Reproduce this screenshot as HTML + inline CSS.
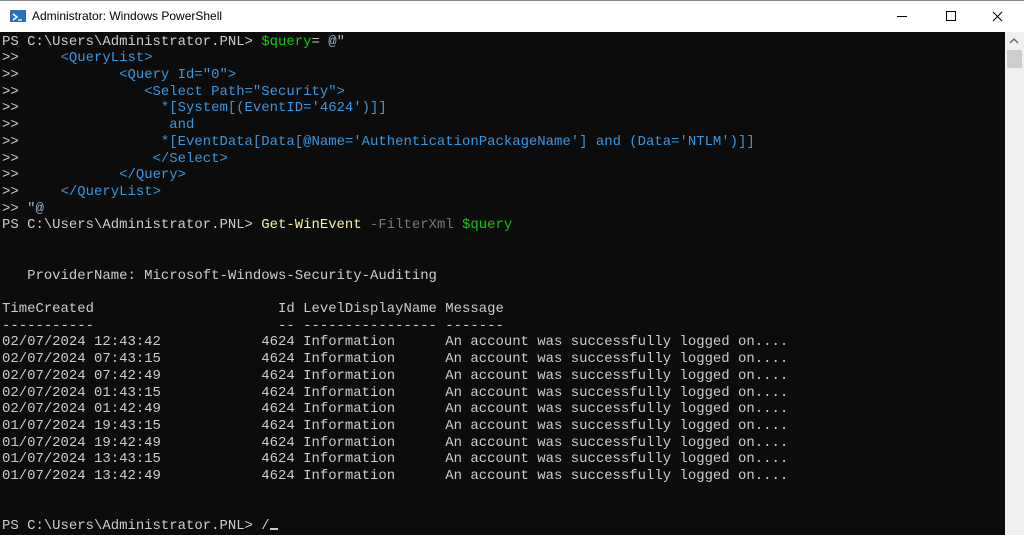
<!DOCTYPE html>
<html><head><style>
body{margin:0;width:1024px;height:535px;overflow:hidden;background:#fff;font-family:"Liberation Sans",sans-serif;}
.title{position:absolute;left:0;top:0;width:1024px;height:32px;background:#fff;border-top:1px solid #888;box-sizing:border-box;}
.title span{position:absolute;left:32px;top:8px;font-size:12px;color:#000;}
.icon{position:absolute;left:10px;top:9px;width:16px;height:12px;background:#2d6fb8;}
.term{position:absolute;left:0;top:32px;width:1005px;height:503px;background:#0c0c0c;}
.sb{position:absolute;left:1005px;top:32px;width:19px;height:503px;background:#f0f0f0;}
.thumb{position:absolute;left:1007px;top:50px;width:15px;height:18px;background:#cdcdcd;}
pre{position:absolute;left:2px;top:33.5px;margin:0;font-family:"Liberation Mono",monospace;font-size:13.95px;line-height:16.72px;color:#cccccc;}
.b{color:#3a96dd}.g{color:#16c60c}.y{color:#f9f1a5}.d{color:#767676}.w{color:#a0b4c8}
.cur{display:inline-block;width:8px;height:2px;background:#ccc;vertical-align:-1px}
</style></head><body>
<div class="title"><div class="icon"><svg width="16" height="12"><path d="M3 3l4 3-4 3" stroke="#fff" stroke-width="1.5" fill="none"/><path d="M8 9h4" stroke="#fff" stroke-width="1.2"/></svg></div><span>Administrator: Windows PowerShell</span>
<svg style="position:absolute;left:880px;top:0" width="144" height="32"><path d="M17 15.5h10" stroke="#000"/><rect x="66.5" y="10.5" width="9" height="9" fill="none" stroke="#000"/><path d="M113 11l9 9M122 11l-9 9" stroke="#000"/></svg></div>
<div class="term"></div>
<div class="sb"><svg width="19" height="20"><path d="M5 11l4-4 4 4" stroke="#606060" fill="none" stroke-width="1.3"/></svg></div>
<div class="thumb"></div>
<pre>PS C:\Users\Administrator.PNL&gt; <span class="g">$query</span>= <span class="w">@"</span>
&gt;&gt;     <span class="b">&lt;QueryList&gt;</span>
&gt;&gt;            <span class="b">&lt;Query Id="0"&gt;</span>
&gt;&gt;               <span class="b">&lt;Select Path="Security"&gt;</span>
&gt;&gt;                 <span class="b">*[System[(EventID='4624')]]</span>
&gt;&gt;                  <span class="b">and</span>
&gt;&gt;                 <span class="b">*[EventData[Data[@Name='AuthenticationPackageName'] and (Data='NTLM')]]</span>
&gt;&gt;                <span class="b">&lt;/Select&gt;</span>
&gt;&gt;            <span class="b">&lt;/Query&gt;</span>
&gt;&gt;     <span class="b">&lt;/QueryList&gt;</span>
&gt;&gt; <span class="w">"@</span>
PS C:\Users\Administrator.PNL&gt; <span class="y">Get-WinEvent</span> <span class="d">-FilterXml</span> <span class="g">$query</span>


   ProviderName: Microsoft-Windows-Security-Auditing

TimeCreated                      Id LevelDisplayName Message
-----------                      -- ---------------- -------
02/07/2024 12:43:42            4624 Information      An account was successfully logged on....
02/07/2024 07:43:15            4624 Information      An account was successfully logged on....
02/07/2024 07:42:49            4624 Information      An account was successfully logged on....
02/07/2024 01:43:15            4624 Information      An account was successfully logged on....
02/07/2024 01:42:49            4624 Information      An account was successfully logged on....
01/07/2024 19:43:15            4624 Information      An account was successfully logged on....
01/07/2024 19:42:49            4624 Information      An account was successfully logged on....
01/07/2024 13:43:15            4624 Information      An account was successfully logged on....
01/07/2024 13:42:49            4624 Information      An account was successfully logged on....


PS C:\Users\Administrator.PNL&gt; /<span class="cur"></span></pre>
</body></html>
